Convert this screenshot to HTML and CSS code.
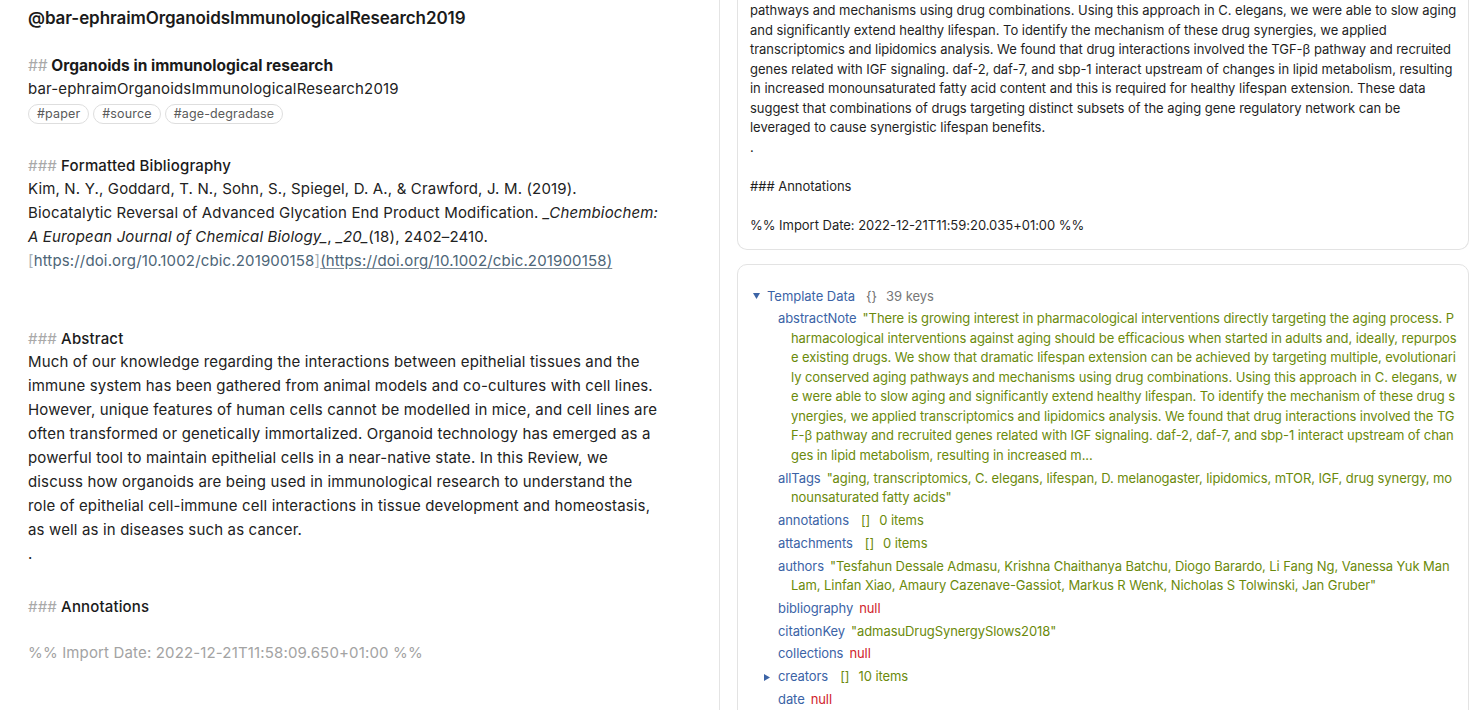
FILE: index.html
```html
<!DOCTYPE html>
<html lang="en">
<head>
<meta charset="utf-8">
<title>bar-ephraimOrganoidsImmunologicalResearch2019</title>
<link rel="stylesheet" href="styles.css">
</head>
<body>
<div class="app">
  <main class="editor">
    <div class="note">
      <div class="title">@bar-ephraimOrganoidsImmunologicalResearch2019</div>
      <div class="h2"><span class="hm">##</span> Organoids in immunological research</div>
      <div class="line">bar-ephraimOrganoidsImmunologicalResearch2019</div>
      <div class="tags"><span class="tag">#paper</span><span class="tag">#source</span><span class="tag">#age-degradase</span></div>
      <div class="h3 first"><span class="hm">###</span> Formatted Bibliography</div>
      <p class="para">Kim, N. Y., Goddard, T. N., Sohn, S., Spiegel, D. A., &amp; Crawford, J. M. (2019). Biocatalytic Reversal of Advanced Glycation End Product Modification. <em>_Chembiochem: A European Journal of Chemical Biology_</em>, <em>_20_</em>(18), 2402–2410. <span class="link"><span class="br">[</span>https://doi.org/10.1002/cbic.201900158<span class="br">]</span><span class="u">(https://doi.org/10.1002/cbic.201900158)</span></span></p>
      <div class="h3 abs"><span class="hm">###</span> Abstract</div>
      <p class="para">Much of our knowledge regarding the interactions between epithelial tissues and the immune system has been gathered from animal models and co-cultures with cell lines. However, unique features of human cells cannot be modelled in mice, and cell lines are often transformed or genetically immortalized. Organoid technology has emerged as a powerful tool to maintain epithelial cells in a near-native state. In this Review, we discuss how organoids are being used in immunological research to understand the role of epithelial cell-immune cell interactions in tissue development and homeostasis, as well as in diseases such as cancer.</p>
      <div class="line">.</div>
      <div class="h3 first"><span class="hm">###</span> Annotations</div>
      <div class="line muted import">%% Import Date: 2022-12-21T11:58:09.650+01:00 %%</div>
    </div>
  </main>
  <aside class="side">
    <section class="card preview">
      <p class="ptext">pathways and mechanisms using drug combinations. Using this approach in C. elegans, we were able to slow aging and significantly extend healthy lifespan. To identify the mechanism of these drug synergies, we applied transcriptomics and lipidomics analysis. We found that drug interactions involved the TGF-β pathway and recruited genes related with IGF signaling. daf-2, daf-7, and sbp-1 interact upstream of changes in lipid metabolism, resulting in increased monounsaturated fatty acid content and this is required for healthy lifespan extension. These data suggest that combinations of drugs targeting distinct subsets of the aging gene regulatory network can be leveraged to cause synergistic lifespan benefits.</p>
      <div class="pline">.</div>
      <div class="pline blank"></div>
      <div class="pline">### Annotations</div>
      <div class="pline blank"></div>
      <div class="pline">%% Import Date: 2022-12-21T11:59:20.035+01:00 %%</div>
    </section>
    <section class="card data">
      <div class="tree">
        <div class="root"><svg class="caret down" width="7" height="6" viewBox="0 0 7 6"><path d="M0 0H7L3.5 6Z"/></svg><span class="key">Template Data</span><span class="brace">{}</span><span class="count">39 keys</span></div>
        <div class="children">
          <div class="row"><span class="key">abstractNote</span><span class="str">"There is growing interest in pharmacological interventions directly targeting the aging process. Pharmacological interventions against aging should be efficacious when started in adults and, ideally, repurpose existing drugs. We show that dramatic lifespan extension can be achieved by targeting multiple, evolutionarily conserved aging pathways and mechanisms using drug combinations. Using this approach in C. elegans, we were able to slow aging and significantly extend healthy lifespan. To identify the mechanism of these drug synergies, we applied transcriptomics and lipidomics analysis. We found that drug interactions involved the TGF-β pathway and recruited genes related with IGF signaling. daf-2, daf-7, and sbp-1 interact upstream of changes in lipid metabolism, resulting in increased m...</span></div>
          <div class="row"><span class="key">allTags</span><span class="str">"aging, transcriptomics, C. elegans, lifespan, D. melanogaster, lipidomics, mTOR, IGF, drug synergy, monounsaturated fatty acids"</span></div>
          <div class="row"><span class="key">annotations</span><span class="arr">[]</span><span class="str">0 items</span></div>
          <div class="row"><span class="key">attachments</span><span class="arr">[]</span><span class="str">0 items</span></div>
          <div class="row"><span class="key">authors</span><span class="str">"Tesfahun Dessale Admasu, Krishna Chaithanya Batchu, Diogo Barardo, Li Fang Ng, Vanessa Yuk Man Lam, Linfan Xiao, Amaury Cazenave-Gassiot, Markus R Wenk, Nicholas S Tolwinski, Jan Gruber"</span></div>
          <div class="row"><span class="key">bibliography</span><span class="null">null</span></div>
          <div class="row"><span class="key">citationKey</span><span class="str">"admasuDrugSynergySlows2018"</span></div>
          <div class="row"><span class="key">collections</span><span class="null">null</span></div>
          <div class="row"><svg class="caret right" width="6" height="7" viewBox="0 0 6 7"><path d="M0 0L6 3.5L0 7Z"/></svg><span class="key">creators</span><span class="arr">[]</span><span class="str">10 items</span></div>
          <div class="row"><span class="key">date</span><span class="null">null</span></div>
          <div class="row"><span class="key">dateAdded</span><span class="str">"2022-12-21T10:59:20.000Z"</span></div>
        </div>
      </div>
    </section>
  </aside>
</div>
</body>
</html>
```

FILE: styles.css
```css
html, body {
  margin: 0;
  padding: 0;
  background: #ffffff;
}

body {
  font-family: Inter, "Noto Sans", "Liberation Sans", sans-serif;
  color: #222222;
  -webkit-font-smoothing: antialiased;
}

.app {
  display: grid;
  grid-template-columns: 720px 1fr;
  height: 710px;
  overflow: hidden;
}

/* ---------- left editor ---------- */
.editor {
  border-right: 1px solid #e4e4e4;
  overflow: hidden;
}

.note {
  width: 632px;
  padding-left: 28px;
  font-size: 15px;
  line-height: 24px;
  letter-spacing: 0.15px;
}

.title {
  margin-top: 6px;
  font-size: 17px;
  font-weight: 600;
  line-height: 24px;
  letter-spacing: -0.08px;
  color: #1a1a1a;
}

.h2 {
  margin-top: 25px;
  font-size: 15.5px;
  font-weight: 700;
  line-height: 22px;
  letter-spacing: 0;
  color: #1a1a1a;
}

.h3 {
  font-size: 15px;
  font-weight: 500;
  line-height: 22px;
  color: #1a1a1a;
}

.h3.first {
  margin-top: 30px;
}

.h3.abs {
  margin-top: 55px;
}

.hm {
  color: #a9a9a9;
  font-weight: 400;
}

.line {
  line-height: 24px;
}

.para {
  margin: 0;
}

.para em {
  font-style: italic;
}

.link {
  color: #4d6577;
}

.link .br {
  color: #a8b0b6;
}

.link .u {
  text-decoration: underline;
  text-decoration-color: #7f8e99;
  text-underline-offset: 2px;
}

.tags {
  display: flex;
  gap: 4px;
  margin-top: 1px;
  height: 23px;
  align-items: center;
}

.tag {
  display: inline-flex;
  align-items: center;
  height: 18px;
  padding: 0 8px;
  border: 1px solid #dedede;
  border-radius: 10px;
  font-size: 12.5px;
  color: #5a5a5a;
}

.muted {
  color: #a3a3a3;
}

.import {
  margin-top: 23px;
}

/* ---------- right side ---------- */
.side {
  display: flex;
  flex-direction: column;
  gap: 14px;
  padding: 0 11px 0 17px;
  overflow: hidden;
}

.card {
  border: 1px solid #e3e3e3;
  border-radius: 10px;
  font-size: 13px;
  line-height: 19.5px;
  letter-spacing: -0.03px;
  color: #1f1f1f;
  background: #ffffff;
}

.preview {
  border-top: none;
  border-radius: 0 0 10px 10px;
  padding: 1px 10px 14px 12px;
}

.ptext {
  margin: 0;
}

.pline.blank {
  height: 19.5px;
}

.data {
  padding: 21px 10px 0 15px;
}

.root,
.row {
  padding: 1.65px 0;
}

.root {
  display: flex;
  align-items: center;
  padding-top: 0.6px;
}

.caret {
  fill: #3c64a6;
  flex: none;
}

.caret.down {
  margin-right: 7px;
}

.caret.right {
  margin-left: -14px;
  margin-right: 8px;
  vertical-align: 0;
}

.key {
  color: #3b63a6;
}

.brace {
  margin-left: 11px;
  color: #6e6e6e;
}

.count {
  margin-left: 9px;
  color: #777777;
}

.children {
  margin-left: 25px;
}

.row {
  padding-left: 13px;
  text-indent: -13px;
  word-break: break-all;
  letter-spacing: -0.08px;
}

.row .key {
  margin-right: 6px;
}

.str {
  color: #6b8a0b;
}

.arr {
  margin-left: 6px;
  margin-right: 9px;
  color: #6b8a0b;
}

.null {
  color: #d0232b;
}
```
